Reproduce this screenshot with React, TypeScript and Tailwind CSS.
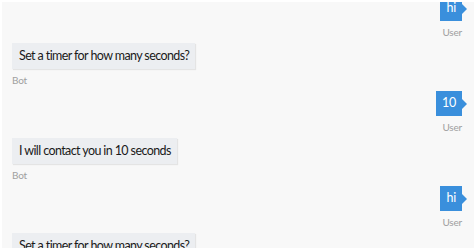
import React from 'react';

type Msg = { from: 'user' | 'bot'; text: string };

const messages: Msg[] = [
  { from: 'user', text: 'hi' },
  { from: 'bot', text: 'Set a timer for how many seconds?' },
  { from: 'user', text: '10' },
  { from: 'bot', text: 'I will contact you in 10 seconds' },
  { from: 'user', text: 'hi' },
  { from: 'bot', text: 'Set a timer for how many seconds?' },
];

function UserMessage({ text }: { text: string }) {
  return (
    <div className="flex flex-col items-end pr-[12px]">
      <div className="relative flex h-[25px] items-center bg-[#3a8fdc] px-[6px] text-[12.5px] tracking-[-0.2px] text-white">
        {text}
        <span className="absolute right-[-5px] top-1/2 h-0 w-0 -translate-y-1/2 border-y-[5px] border-l-[5px] border-y-transparent border-l-[#3a8fdc]" />
      </div>
      <div className="mt-[5px] h-[12px] text-[10px] leading-[12px] tracking-[-0.2px] text-[#a0a0a0]">User</div>
    </div>
  );
}

function BotMessage({ text }: { text: string }) {
  return (
    <div className="flex flex-col items-start pl-[10px]">
      <div className="flex h-[26px] items-center bg-[#eceef1] pl-[7px] pr-[6px] text-[12.5px] tracking-[-0.6px] text-[#1a1a1a] shadow-[1px_1px_1px_rgba(0,0,0,0.08)]">
        {text}
      </div>
      <div className="mt-[5px] h-[12px] text-[10px] leading-[12px] tracking-[-0.2px] text-[#a0a0a0]">Bot</div>
    </div>
  );
}

export default function App() {
  return (
    <div
      className="h-[248px] w-[474px] overflow-hidden border-l-2 border-t-2 border-white bg-[#f8f8f8]"
      style={{ fontFamily: 'Lato, "Open Sans", sans-serif' }}
    >
      <div className="-mt-[6px] flex flex-col gap-[5px]">
        {messages.map((m, i) =>
          m.from === 'user' ? <UserMessage key={i} text={m.text} /> : <BotMessage key={i} text={m.text} />
        )}
      </div>
    </div>
  );
}
